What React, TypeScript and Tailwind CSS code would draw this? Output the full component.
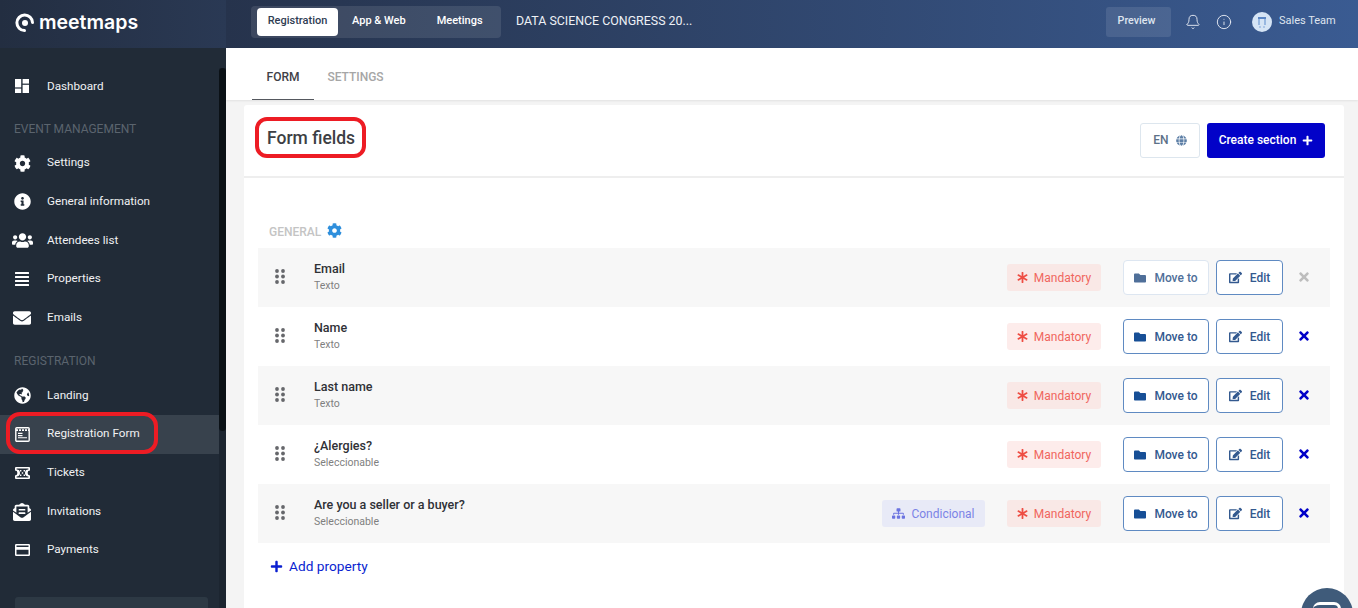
import type { ReactNode } from 'react'
import {
  FaAlignJustify,
  FaAsterisk,
  FaCog,
  FaEdit,
  FaEnvelope,
  FaEnvelopeOpenText,
  FaFolder,
  FaGlobe,
  FaGlobeAmericas,
  FaInfoCircle,
  FaPlus,
  FaSitemap,
  FaTimes,
  FaUsers,
} from 'react-icons/fa'
import { Bell, Info } from 'lucide-react'

function DashboardIcon() {
  return (
    <svg width="14" height="14" viewBox="0 0 14 14" fill="currentColor">
      <rect x="0" y="0" width="6.2" height="8.4" />
      <rect x="7.6" y="0" width="6.4" height="4.6" />
      <rect x="0" y="9.6" width="6.2" height="4.4" />
      <rect x="7.6" y="5.8" width="6.4" height="8.2" />
    </svg>
  )
}

function FormIcon() {
  return (
    <svg width="15" height="15" viewBox="0 0 15 15" fill="none" stroke="currentColor">
      <rect x="0.8" y="0.8" width="13.4" height="13.4" rx="1" strokeWidth="1.4" />
      <path d="M1 3.2h13" strokeWidth="1.8" strokeDasharray="2 1" />
      <path d="M3 6.4h4.5M3 8.6h4.5M3 10.8h9" strokeWidth="1.1" />
    </svg>
  )
}

function TicketIcon() {
  return (
    <svg width="15" height="12" viewBox="0 0 15 12" fill="currentColor">
      <path
        fillRule="evenodd"
        d="M1 0h13a1 1 0 0 1 1 1v2.6a2.4 2.4 0 0 0 0 4.8V11a1 1 0 0 1-1 1H1a1 1 0 0 1-1-1V8.4a2.4 2.4 0 0 0 0-4.8V1a1 1 0 0 1 1-1Zm.6 1.6v1A3.4 3.4 0 0 1 1.6 9.4v1h11.8v-1a3.4 3.4 0 0 1 0-6.8v-1H1.6Z"
      />
      <path d="M5 3h1.4v1.6H5zM5 7.4h1.4V9H5zM8.6 3H10v1.6H8.6zM8.6 7.4H10V9H8.6zM6.8 5.2h1.4v1.6H6.8z" />
    </svg>
  )
}

function CardIcon() {
  return (
    <svg width="15" height="12" viewBox="0 0 15 12" fill="currentColor">
      <path
        fillRule="evenodd"
        d="M1.2 0h12.6A1.2 1.2 0 0 1 15 1.2v9.6a1.2 1.2 0 0 1-1.2 1.2H1.2A1.2 1.2 0 0 1 0 10.800V1.200A1.200 1.200 0 0 1 1.200 0ZM1.500 1.500v1.600h12V1.500h-12Zm0 4.200v4.800h12V5.700h-12Z"
      />
    </svg>
  )
}

function GripDots() {
  return (
    <svg width="10" height="15" viewBox="0 0 10 15" fill="#66676b">
      <circle cx="2" cy="2" r="1.9" />
      <circle cx="8" cy="2" r="1.9" />
      <circle cx="2" cy="7.5" r="1.9" />
      <circle cx="8" cy="7.5" r="1.9" />
      <circle cx="2" cy="13" r="1.9" />
      <circle cx="8" cy="13" r="1.9" />
    </svg>
  )
}

function NavItem({ icon, label, active }: { icon: ReactNode; label: string; active?: boolean }) {
  return (
    <div className={`flex h-[38.7px] items-center ${active ? 'bg-[#38424d]' : ''}`}>
      <div className="flex w-[47px] shrink-0 items-center justify-center pr-[3px] text-white">{icon}</div>
      <span className="text-[11.7px] text-[#f0f1f3]">{label}</span>
    </div>
  )
}

function NavHeading({ label }: { label: string }) {
  return <div className="px-[14px] text-[12px] leading-[14px] text-[#5b646e]">{label}</div>
}

function Sidebar() {
  return (
    <aside className="relative flex w-[226px] shrink-0 flex-col overflow-hidden bg-[#212b37]">
      <div className="flex h-[48px] shrink-0 items-center gap-[4px] bg-gradient-to-r from-[#232e41] to-[#2a3954] pb-[3px] pl-[15px]">
        <svg width="20" height="20" viewBox="0 0 20 20" fill="none">
          <path
            d="M17.5 9.5A7.8 7.8 0 1 0 9.5 17.6"
            stroke="#fff"
            strokeWidth="3"
            strokeLinecap="round"
          />
          <circle cx="10" cy="10" r="3" fill="#fff" />
        </svg>
        <span className="font-['Inter',sans-serif] text-[19.5px] leading-none font-semibold text-white">
          meetmaps
        </span>
      </div>
      <div className="shrink-0 pt-[19px]">
        <NavItem icon={<DashboardIcon />} label="Dashboard" />
        <div className="mt-[16px] mb-[8px]">
          <NavHeading label="EVENT MANAGEMENT" />
        </div>
        <NavItem icon={<FaCog size={17} />} label="Settings" />
        <NavItem icon={<FaInfoCircle size={17} />} label="General information" />
        <NavItem icon={<FaUsers size={21} />} label="Attendees list" />
        <NavItem icon={<FaAlignJustify size={16} />} label="Properties" />
        <NavItem icon={<FaEnvelope size={18} />} label="Emails" />
        <div className="mt-[17px] mb-[8px]">
          <NavHeading label="REGISTRATION" />
        </div>
        <NavItem icon={<FaGlobeAmericas size={17} />} label="Landing" />
        <NavItem icon={<FormIcon />} label="Registration Form" active />
        <NavItem icon={<TicketIcon />} label="Tickets" />
        <NavItem icon={<FaEnvelopeOpenText size={18} />} label="Invitations" />
        <NavItem icon={<CardIcon />} label="Payments" />
      </div>
      <div className="mx-[15px] mt-[27px] h-[40px] w-[193px] shrink-0 rounded-[3px] bg-[#2d3944]" />
      {/* scrollbar */}
      <div className="absolute top-[68px] right-0 bottom-0 w-[7px] bg-[#1c2530]">
        <div className="h-[363px] rounded-[4px] bg-[#0b1116]" />
      </div>
    </aside>
  )
}

function TopBar() {
  return (
    <header className="flex h-[48px] shrink-0 items-center bg-gradient-to-r from-[#26334c] to-[#3a5b92] pr-[23px] pb-[5px] pl-[25px] text-white">
      <div className="flex h-[32px] w-[250px] items-center rounded-[4px] bg-white/10 pl-[6px]">
        <div className="flex h-[28px] w-[81px] items-center justify-center rounded-[4px] bg-white text-[11px] font-medium text-[#2f3d52]">
          Registration
        </div>
        <div className="ml-[14px] text-[11px] font-medium text-white">App &amp; Web</div>
        <div className="ml-[31px] text-[11px] font-medium text-white">Meetings</div>
      </div>
      <div className="ml-[15px] text-[12.4px] text-[#eef1f6]">DATA SCIENCE CONGRESS 20...</div>
      <div className="ml-auto flex h-[30px] w-[65px] items-center justify-center rounded-[3px] bg-white/10 pr-[4px] text-[10.7px] font-medium text-[#dfe5ef]">
        Preview
      </div>
      <Bell size={16} strokeWidth={1.4} className="ml-[14px] text-[#e6ebf3]" />
      <Info size={16} strokeWidth={1.4} className="ml-[15px] text-[#e6ebf3]" />
      <div className="ml-[20px] flex h-[20px] w-[20px] items-center justify-center rounded-full bg-[#d5e4f5]">
        <svg width="12" height="12" viewBox="0 0 12 12" fill="none">
          <path d="M2 2h8" stroke="#5b86c4" strokeWidth="2" />
          <path d="M3 3v6M9 3v6" stroke="#7ea5d8" strokeWidth="1.4" />
          <circle cx="4" cy="11" r="1" fill="#9dbbe2" />
          <circle cx="8" cy="11" r="1" fill="#9dbbe2" />
        </svg>
      </div>
      <div className="ml-[7px] w-[56px] text-[11px] whitespace-nowrap text-[#dfe5ef]">Sales Team</div>
    </header>
  )
}

function Chip({ tone, label, icon }: { tone: string; label: string; icon: ReactNode }) {
  return (
    <div className={`flex h-[27px] items-center justify-center gap-[6px] rounded-[3px] text-[12px] ${tone}`}>
      {icon}
      <span>{label}</span>
    </div>
  )
}

function OutlineButton({
  icon,
  label,
  width,
  muted,
}: {
  icon: ReactNode
  label: string
  width: string
  muted?: boolean
}) {
  return (
    <div
      className={`flex h-[35px] items-center justify-center gap-[8px] rounded-[4px] border bg-white text-[12px] font-medium ${width} ${
        muted ? 'border-[#dde6f1] text-[#4f6f99]' : 'border-[#5f8ac2] text-[#33598f]'
      }`}
    >
      {icon}
      <span>{label}</span>
    </div>
  )
}

type Field = { name: string; kind: string; conditional?: boolean; locked?: boolean }

const fields: Field[] = [
  { name: 'Email', kind: 'Texto', locked: true },
  { name: 'Name', kind: 'Texto' },
  { name: 'Last name', kind: 'Texto' },
  { name: '¿Alergies?', kind: 'Seleccionable' },
  { name: 'Are you a seller or a buyer?', kind: 'Seleccionable', conditional: true },
]

function FieldRow({ field, shaded }: { field: Field; shaded: boolean }) {
  return (
    <div className={`flex h-[59px] items-center ${shaded ? 'bg-[#f7f7f7]' : 'bg-white'}`}>
      <div className="flex w-[56px] shrink-0 pb-[3px] pl-[17px]">
        <GripDots />
      </div>
      <div className="pb-[1px]">
        <div className="text-[12.5px] leading-[16px] font-medium text-[#2f3136]">{field.name}</div>
        <div className="mt-[2px] text-[10.5px] leading-[14px] text-[#7f7f7f]">{field.kind}</div>
      </div>
      <div className="ml-auto flex items-center">
        {field.conditional && (
          <div className="mr-[22px] w-[103px]">
            <Chip
              tone="bg-[#e8eaf7] text-[#7b83e6]"
              label="Condicional"
              icon={<FaSitemap size={13} className="text-[#6b73e0]" />}
            />
          </div>
        )}
        <div className="mr-[22px] w-[94px]">
          <Chip
            tone={`${shaded ? 'bg-[#f9e8e6]' : 'bg-[#fdeceb]'} text-[#f0665e]`}
            label="Mandatory"
            icon={<FaAsterisk size={11} className="text-[#ee4d43]" />}
          />
        </div>
        <OutlineButton
          width="w-[86px]"
          label="Move to"
          muted={field.locked}
          icon={<FaFolder size={12} className={field.locked ? 'text-[#4f6f99]' : 'text-[#174f96]'} />}
        />
        <div className="ml-[7px]">
          <OutlineButton width="w-[67px]" label="Edit" icon={<FaEdit size={13} className="text-[#33598f]" />} />
        </div>
        <div className="flex w-[47px] justify-start pb-[1px] pl-[14px]">
          <FaTimes size={14} className={field.locked ? 'text-[#bdbdbd]' : 'text-[#0000c8]'} />
        </div>
      </div>
    </div>
  )
}

function FormCard() {
  return (
    <section className="relative mt-[5px] mr-[14px] ml-[18px] min-h-0 flex-1 rounded-t-[3px] bg-white">
      <div className="flex h-[73px] items-center justify-between border-b-2 border-[#eeeeee] pr-[19px] pl-[23px]">
        <h1 className="pb-[5px] text-[17.5px] font-medium text-[#3d3f44]">Form fields</h1>
        <div className="flex gap-[7px] pb-[1px]">
          <div className="flex h-[35px] w-[60px] items-center justify-center gap-[7px] rounded-[3px] border border-[#dde6ee] text-[12px] font-medium text-[#5d7188]">
            EN
            <FaGlobe size={11} className="text-[#5d7fa6]" />
          </div>
          <div className="flex h-[35px] w-[118px] items-center justify-center gap-[6px] rounded-[3px] bg-[#0202c8] text-[12px] font-medium text-white">
            Create section
            <FaPlus size={11} />
          </div>
        </div>
      </div>
      <div className="px-[14px]">
        <div className="flex h-[70px] items-end gap-[6px] pb-[8px] pl-[11px]">
          <span className="text-[12px] leading-[16px] font-medium text-[#c4c4c4]">GENERAL</span>
          <FaCog size={15} className="mb-[2px] text-[#2f8fdc]" />
        </div>
        {fields.map((field, i) => (
          <FieldRow key={field.name} field={field} shaded={i % 2 === 0} />
        ))}
        <div className="mt-[13px] flex items-center gap-[6px] pl-[12px] text-[13.7px] text-[#0a1fd0]">
          <FaPlus size={13} />
          Add property
        </div>
      </div>
      {/* highlight drawn around the title */}
      <div className="absolute top-[12px] left-[11px] h-[41px] w-[111px] rounded-[12px] border-[4px] border-[#ed1c24]" />
    </section>
  )
}

export default function App() {
  return (
    <div className="relative flex h-[608px] w-[1358px] overflow-hidden bg-[#f4f4f4] font-['Roboto',sans-serif]">
      <Sidebar />
      <main className="flex min-w-0 flex-1 flex-col">
        <TopBar />
        <div className="flex h-[52px] shrink-0 items-end bg-white pl-[26px] shadow-[0_1px_2px_rgba(0,0,0,0.08)]">
          <div className="flex h-[53px] w-[62px] items-center justify-center border-b border-[#55585e] pt-[7px] text-[12px] font-medium text-[#3f4146]">
            FORM
          </div>
          <div className="flex h-[53px] w-[83px] items-center justify-center pt-[7px] text-[12px] font-medium text-[#a6a6a6]">
            SETTINGS
          </div>
        </div>
        <FormCard />
      </main>
      {/* highlight drawn around the active menu item */}
      <div className="absolute top-[412px] left-[6px] h-[42px] w-[152px] rounded-[14px] border-[4px] border-[#ed1c24]" />
      {/* chat bubble */}
      <div className="absolute top-[588px] left-[1301px] flex h-[52px] w-[52px] justify-center rounded-full bg-[#3f5b7a] pt-[14px]">
        <div className="h-[14px] w-[28px] rounded-t-[7px] border-t-[3px] border-r-[3px] border-white" />
      </div>
    </div>
  )
}
